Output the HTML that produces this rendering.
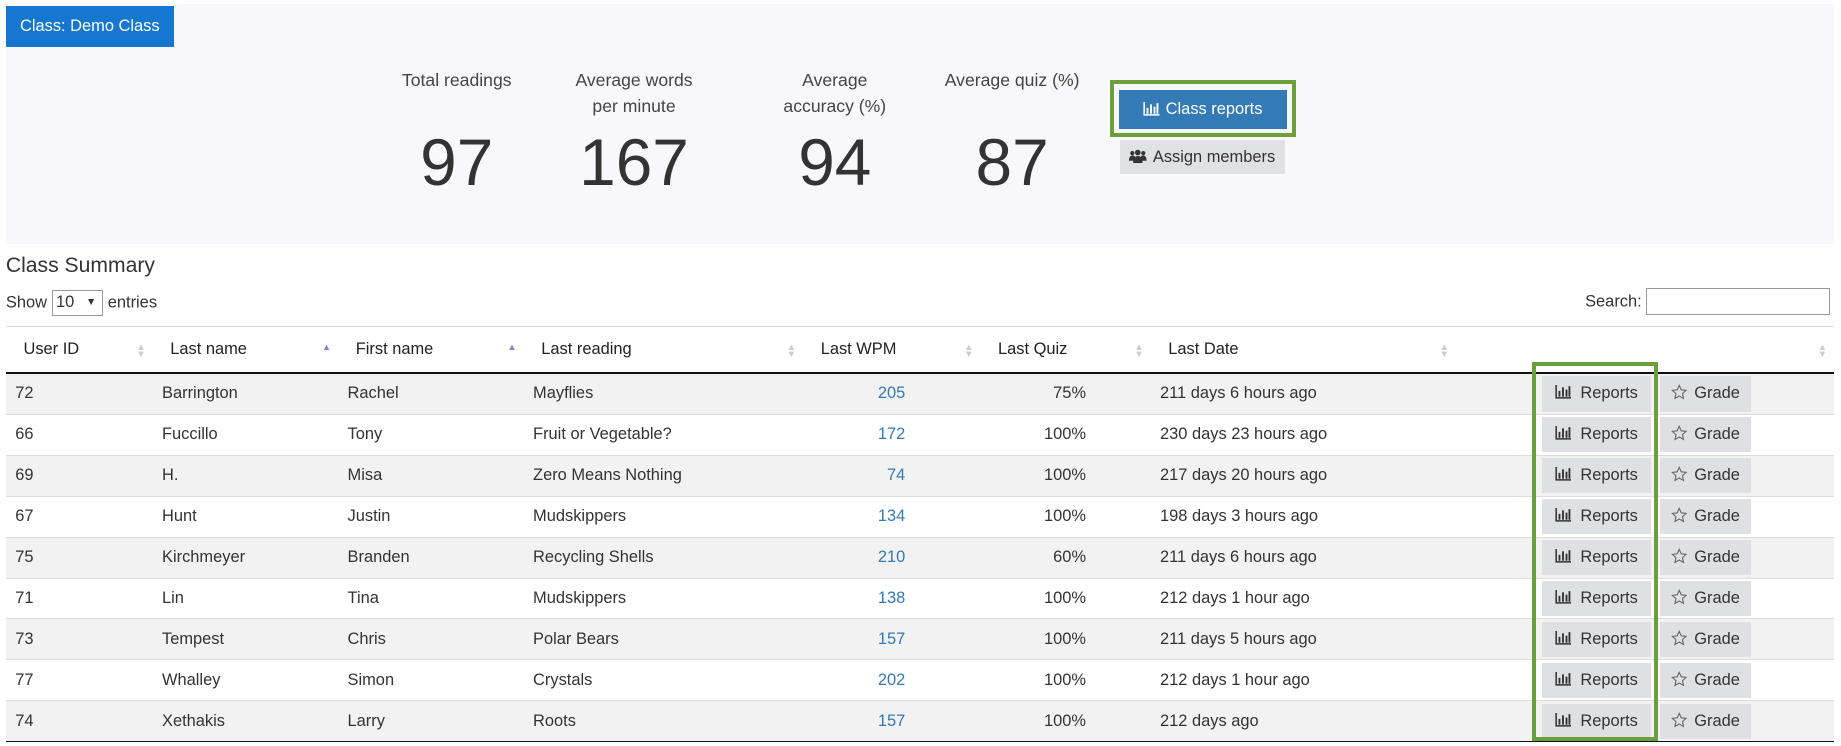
<!DOCTYPE html>
<html><head><meta charset="utf-8"><style>
html,body{margin:0;padding:0;background:#fff;overflow:hidden}
body{zoom:1.17415;width:1568px;height:635px;position:relative;font-family:"Liberation Sans",sans-serif;color:#333;font-size:14px}
.panel{position:absolute;left:5px;top:3px;width:1557px;height:205px;background:#f8f8fc}
.cls{position:absolute;left:5px;top:5px;width:143px;height:35px;background:#1577d0;color:#fff;font-size:14px;line-height:35px;text-align:center}
.stat{position:absolute;top:58px;width:150px;text-align:center}
.stat .l{font-size:15px;color:#444;line-height:22px;height:44px}
.stat .n{font-size:56px;line-height:60px;margin-top:6px;color:#333}
.gbox{position:absolute;border:4px solid #6a9f3c;box-sizing:border-box}
.cr{position:absolute;left:953px;top:77px;width:143px;height:33px;background:#337ab7;color:#fff;line-height:33px;text-align:center;font-size:14px}
.am{position:absolute;left:954px;top:119px;width:140px;height:29px;background:#e0e1e5;line-height:29px;text-align:center;font-size:14px;color:#333}
.h{position:absolute;left:5px;top:216px;font-size:18px;color:#333}
.show{position:absolute;left:5px;top:247px;font-size:14px}
.sel{display:inline-block;border:1px solid #999;vertical-align:middle;line-height:20px;padding-left:3px;box-sizing:border-box;width:44px;height:22px;position:relative}
.search{position:absolute;left:1350px;top:245px;font-size:14px}
.search span{display:inline-block;width:155px;height:22px;border:1px solid #999;vertical-align:middle;margin-left:4px;background:#fff}
table{position:absolute;left:5px;top:278px;width:1557px;border-collapse:collapse;table-layout:fixed;border-top:1px solid #ddd}
th{height:38px;text-align:left;font-weight:normal;padding:0 0 0 15px;border-bottom:2px solid #111;position:relative;color:#222}
td{height:34px;padding:0 0 0 8px;border-top:1px solid #ddd;color:#333}
tr:nth-child(odd) td{background:#f2f2f2}
tbody tr:last-child td{border-bottom:1px solid #111}
.s{position:absolute;right:6px;top:13px;font-size:8px;color:#ccc;line-height:6px}
.a{position:absolute;right:6px;top:12px;font-size:8px;color:#8585c8}
.r{text-align:right;padding-right:0}
.lk{color:#337ab7}
.b{display:inline-block;height:30px;line-height:30px;background:#dfe0e4;vertical-align:middle;font-size:14px}
</style></head><body>
<div class="panel"></div>
<div class="cls">Class: Demo Class</div>
<div class="stat" style="left:314px"><div class="l">Total readings</div><div class="n">97</div></div>
<div class="stat" style="left:465px"><div class="l">Average words<br>per minute</div><div class="n">167</div></div>
<div class="stat" style="left:636px"><div class="l">Average<br>accuracy (%)</div><div class="n">94</div></div>
<div class="stat" style="left:787px"><div class="l">Average quiz (%)</div><div class="n">87</div></div>
<div class="gbox" style="left:945px;top:68px;width:159px;height:49px"></div>
<div class="cr"><svg width="14" height="12" viewBox="0 0 14 12" style="vertical-align:-1px;margin-right:5px"><path d="M1 0v11h13" stroke="#fff" fill="none" stroke-width="1.3"/><rect x="3" y="5" width="1.6" height="5" fill="#fff"/><rect x="6" y="2" width="1.6" height="8" fill="#fff"/><rect x="9" y="4" width="1.6" height="6" fill="#fff"/><rect x="11.5" y="1" width="1.6" height="9" fill="#fff"/></svg>Class reports</div>
<div class="am"><svg width="15" height="12" viewBox="0 0 15 12" style="vertical-align:-1px;margin-right:5px"><circle cx="7.5" cy="3" r="2.4" fill="#333"/><circle cx="2.8" cy="3.5" r="1.8" fill="#333"/><circle cx="12.2" cy="3.5" r="1.8" fill="#333"/><path d="M3.5 12c0-4 1.5-6 4-6s4 2 4 6z" fill="#333"/><path d="M0 10c0-3 1-4.5 3-4.5s2 1 2 1.5l-1 3z M15 10c0-3-1-4.5-3-4.5s-2 1-2 1.5l1 3z" fill="#333"/></svg>Assign members</div>
<div class="h">Class Summary</div>
<div class="show">Show <span class="sel">10<span style="position:absolute;right:5px;font-size:9px">▼</span></span> entries</div>
<div class="search">Search:<span></span></div>
<table>
<colgroup><col style="width:125px"><col style="width:158px"><col style="width:158px"><col style="width:238px"><col style="width:151px"><col style="width:145px"><col style="width:260px"><col style="width:322px"></colgroup>
<thead><tr>
<th>User ID<span class="s">▲<br>▼</span></th><th>Last name<span class="a">▲</span></th><th>First name<span class="a">▲</span></th><th>Last reading<span class="s">▲<br>▼</span></th><th>Last WPM<span class="s">▲<br>▼</span></th><th>Last Quiz<span class="s">▲<br>▼</span></th><th>Last Date<span class="s">▲<br>▼</span></th><th><span class="s">▲<br>▼</span></th>
</tr></thead>
<tbody id="tb">
<tr><td>72</td><td>Barrington</td><td>Rachel</td><td>Mayflies</td><td class="r lk" style="padding-right:64px">205</td><td class="r" style="padding-right:55px">75%</td><td>211 days 6 hours ago</td><td class="x"></td></tr>
<tr><td>66</td><td>Fuccillo</td><td>Tony</td><td>Fruit or Vegetable?</td><td class="r lk" style="padding-right:64px">172</td><td class="r" style="padding-right:55px">100%</td><td>230 days 23 hours ago</td><td class="x"></td></tr>
<tr><td>69</td><td>H.</td><td>Misa</td><td>Zero Means Nothing</td><td class="r lk" style="padding-right:64px">74</td><td class="r" style="padding-right:55px">100%</td><td>217 days 20 hours ago</td><td class="x"></td></tr>
<tr><td>67</td><td>Hunt</td><td>Justin</td><td>Mudskippers</td><td class="r lk" style="padding-right:64px">134</td><td class="r" style="padding-right:55px">100%</td><td>198 days 3 hours ago</td><td class="x"></td></tr>
<tr><td>75</td><td>Kirchmeyer</td><td>Branden</td><td>Recycling Shells</td><td class="r lk" style="padding-right:64px">210</td><td class="r" style="padding-right:55px">60%</td><td>211 days 6 hours ago</td><td class="x"></td></tr>
<tr><td>71</td><td>Lin</td><td>Tina</td><td>Mudskippers</td><td class="r lk" style="padding-right:64px">138</td><td class="r" style="padding-right:55px">100%</td><td>212 days 1 hour ago</td><td class="x"></td></tr>
<tr><td>73</td><td>Tempest</td><td>Chris</td><td>Polar Bears</td><td class="r lk" style="padding-right:64px">157</td><td class="r" style="padding-right:55px">100%</td><td>211 days 5 hours ago</td><td class="x"></td></tr>
<tr><td>77</td><td>Whalley</td><td>Simon</td><td>Crystals</td><td class="r lk" style="padding-right:64px">202</td><td class="r" style="padding-right:55px">100%</td><td>212 days 1 hour ago</td><td class="x"></td></tr>
<tr><td>74</td><td>Xethakis</td><td>Larry</td><td>Roots</td><td class="r lk" style="padding-right:64px">157</td><td class="r" style="padding-right:55px">100%</td><td>212 days ago</td><td class="x"></td></tr>
</tbody></table>
<div class="gbox" style="left:1305px;top:308px;width:107px;height:323px"></div>
<script>
var btn='<span class="b" style="width:93px;margin-left:65px;text-align:center"><svg width="14" height="12" viewBox="0 0 14 12" style="vertical-align:-1px;margin-right:8px"><path d="M1 0v11h13" stroke="#333" fill="none" stroke-width="1.3"/><rect x="3" y="5" width="1.6" height="5" fill="#333"/><rect x="6" y="2" width="1.6" height="8" fill="#333"/><rect x="9" y="4" width="1.6" height="6" fill="#333"/><rect x="11.5" y="1" width="1.6" height="9" fill="#333"/></svg>Reports</span><span class="b" style="width:77px;margin-left:8px;text-align:center"><svg width="14" height="14" viewBox="0 0 24 24" style="vertical-align:-2px;margin-right:6px"><path d="M12 2l3 6.5 7 .8-5.2 4.8 1.4 7L12 17.6 5.8 21.1l1.4-7L2 9.3l7-.8z" fill="none" stroke="#666" stroke-width="1.6"/></svg>Grade</span>';
document.querySelectorAll('td.x').forEach(function(t){t.innerHTML=btn;});
</script>
</body></html>
